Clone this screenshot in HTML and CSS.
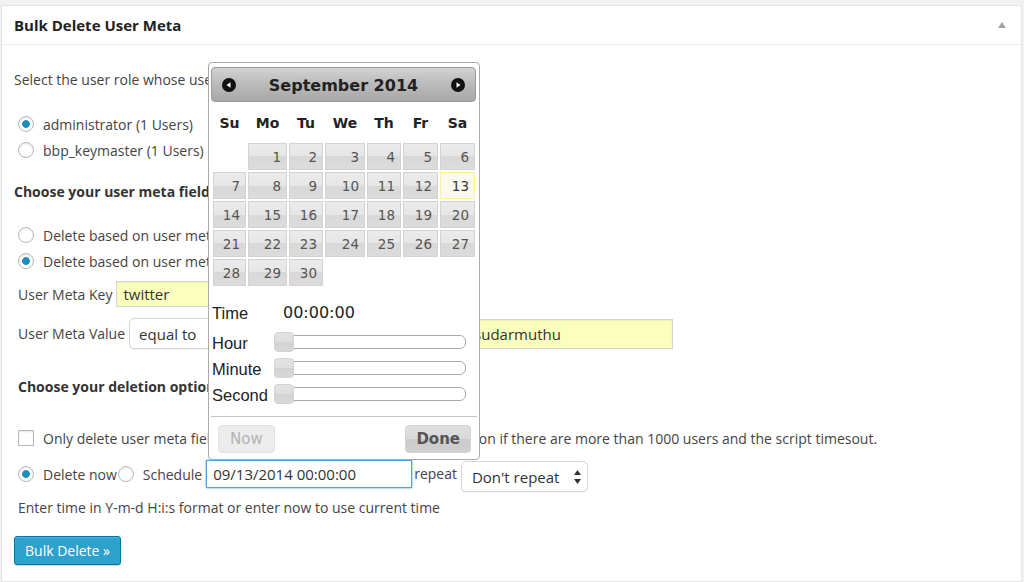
FILE: index.html
```html
<!DOCTYPE html>
<html lang="en">
<head>
    <meta charset="UTF-8">
    <title>Bulk Delete User Meta</title>
    <link rel="stylesheet" href="styles.css">
</head>
<body>
    <div class="postbox">
        <div class="hndle">
            <span>Bulk Delete User Meta</span>
            <svg class="toggle" width="8" height="6" viewBox="0 0 8 6"><polygon points="0,6 4,0 8,6" fill="#a0a5aa"/></svg>
        </div>

        <div class="inside">
            <p class="intro">Select the user role whose user meta fields you want to delete</p>

            <div class="options">
                <label class="opt"><input type="radio" name="role" class="radio" checked>administrator (1 Users)</label>
                <label class="opt"><input type="radio" name="role" class="radio">bbp_keymaster (1 Users)</label>
            </div>

            <h4 class="section">Choose your user meta field settings</h4>

            <div class="options">
                <label class="opt"><input type="radio" name="meta" class="radio">Delete based on user meta key name only</label>
                <label class="opt"><input type="radio" name="meta" class="radio" checked>Delete based on user meta key name and value</label>
            </div>

            <div class="field-row key-row">
                <span>User Meta Key</span>
                <input type="text" class="text autofill key-input" value="twitter">
            </div>

            <div class="field-row value-row">
                <span>User Meta Value</span>
                <div class="select op-select"><span>equal to</span>
                    <svg width="7" height="14" viewBox="0 0 7 14"><polygon points="0,5 3.5,0 7,5" fill="#333"/><polygon points="0,9 3.5,14 7,9" fill="#333"/></svg>
                </div>
                <div class="select type-select"><span>CHAR</span>
                    <svg width="7" height="14" viewBox="0 0 7 14"><polygon points="0,5 3.5,0 7,5" fill="#333"/><polygon points="0,9 3.5,14 7,9" fill="#333"/></svg>
                </div>
                <input type="text" class="text autofill value-input" value="sudarmuthu">
            </div>

            <h4 class="section indent">Choose your deletion options</h4>

            <label class="opt check-row"><input type="checkbox" class="checkbox">Only delete user meta fields from the first 1000 users. Use this option if there are more than 1000 users and the script timesout.</label>

            <div class="now-row">
                <label class="opt delete-now"><input type="radio" name="when" class="radio" checked>Delete now</label>
                <label class="opt schedule"><input type="radio" name="when" class="radio">Schedule</label>
                <input type="text" class="text focus schedule-input" value="09/13/2014 00:00:00">
                <span class="repeat">repeat</span>
                <div class="select repeat-select"><span>Don't repeat</span>
                    <svg width="7" height="14" viewBox="0 0 7 14"><polygon points="0,5 3.5,0 7,5" fill="#333"/><polygon points="0,9 3.5,14 7,9" fill="#333"/></svg>
                </div>
            </div>

            <p class="hint">Enter time in Y-m-d H:i:s format or enter now to use current time</p>

            <button class="button-primary">Bulk Delete &raquo;</button>
        </div>
    </div>

    <!-- datepicker popup, open over the schedule field -->
    <div class="datepicker">
        <div class="dp-header">
            <svg width="14" height="14" viewBox="0 0 14 14"><circle cx="7" cy="7" r="7" fill="#111"/><polygon points="4.5,7 8.5,4.2 8.5,9.8" fill="#fff"/></svg>
            <span class="dp-title">September 2014</span>
            <svg width="14" height="14" viewBox="0 0 14 14"><circle cx="7" cy="7" r="7" fill="#111"/><polygon points="9.5,7 5.5,4.2 5.5,9.8" fill="#fff"/></svg>
        </div>

        <table class="dp-calendar">
            <colgroup>
                <col class="col-su"><col class="col-mo"><col class="col-tu"><col class="col-we">
                <col class="col-th"><col class="col-fr"><col class="col-sa">
            </colgroup>
            <thead>
                <tr><th>Su</th><th>Mo</th><th>Tu</th><th>We</th><th>Th</th><th>Fr</th><th>Sa</th></tr>
            </thead>
            <tbody>
                <tr><td></td><td><a>1</a></td><td><a>2</a></td><td><a>3</a></td><td><a>4</a></td><td><a>5</a></td><td><a>6</a></td></tr>
                <tr><td><a>7</a></td><td><a>8</a></td><td><a>9</a></td><td><a>10</a></td><td><a>11</a></td><td><a>12</a></td><td><a class="today">13</a></td></tr>
                <tr><td><a>14</a></td><td><a>15</a></td><td><a>16</a></td><td><a>17</a></td><td><a>18</a></td><td><a>19</a></td><td><a>20</a></td></tr>
                <tr><td><a>21</a></td><td><a>22</a></td><td><a>23</a></td><td><a>24</a></td><td><a>25</a></td><td><a>26</a></td><td><a>27</a></td></tr>
                <tr><td><a>28</a></td><td><a>29</a></td><td><a>30</a></td><td></td><td></td><td></td><td></td></tr>
            </tbody>
        </table>

        <dl class="dp-time">
            <dt class="time-label">Time</dt>
            <dd class="time-value">00:00:00</dd>
            <dt>Hour</dt>
            <dd><div class="slider"><span class="handle"></span></div></dd>
            <dt>Minute</dt>
            <dd><div class="slider"><span class="handle"></span></div></dd>
            <dt>Second</dt>
            <dd><div class="slider"><span class="handle"></span></div></dd>
        </dl>

        <div class="dp-buttons">
            <button class="dp-btn now" disabled>Now</button>
            <button class="dp-btn done">Done</button>
        </div>
    </div>
</body>
</html>
```

FILE: styles.css
```css
body {
    margin: 0;
    background: #f1f1f1;
    font-family: 'Open Sans', sans-serif;
    font-size: 14px;
    color: #444;
}

.postbox {
    margin: 5px 2px 0 1px;
    background: #fff;
    border: 1px solid #e5e5e5;
    box-shadow: 0 1px 1px rgba(0,0,0,0.04);
}

.hndle {
    display: flex;
    justify-content: space-between;
    align-items: center;
    height: 38px;
    padding: 0 15px 0 12px;
    border-bottom: 1px solid #eee;
    font-size: 15px;
    font-weight: bold;
    color: #222;
}

.inside {
    padding: 0 12px 16px;
}

.intro {
    margin: 25px 0 0;
    line-height: 20px;
}

.options {
    margin-top: 21px;
}

.section + .options {
    margin-top: 20px;
}

.opt {
    display: flex;
    align-items: center;
    height: 26px;
    padding-left: 4px;
}

.section {
    margin: 19px 0 0;
    line-height: 20px;
    font-size: 14px;
    font-weight: bold;
    color: #333;
}

.section.indent {
    margin-top: 28px;
    padding-left: 4px;
}

.radio,
.checkbox {
    appearance: none;
    -webkit-appearance: none;
    flex: none;
    width: 16px;
    height: 16px;
    margin: 0 9px 0 0;
    border: 1px solid #b4b9be;
    background: #fff;
    box-shadow: inset 0 1px 2px rgba(0,0,0,0.1);
}

.radio {
    border-radius: 50%;
}

.radio:checked {
    background: radial-gradient(circle, #1e8cbe 0, #1e8cbe 3.5px, #fff 4.2px);
}

.field-row {
    display: flex;
    align-items: center;
    padding-left: 4px;
}

.key-row {
    margin-top: 7px;
}

.value-row {
    margin-top: 11px;
}

.text {
    box-sizing: border-box;
    margin: 0;
    padding: 0 6px;
    font-family: 'Open Sans', sans-serif;
    font-size: 15px;
    color: #333;
    border: 1px solid #d4d4d4;
    box-shadow: inset 0 1px 2px rgba(0,0,0,0.07);
    outline: none;
}

.autofill {
    background: #faffbd;
}

.key-input {
    width: 250px;
    height: 26px;
    margin-left: 4px;
}

.value-input {
    width: 206px;
    height: 30px;
    margin-left: 4px;
}

.select {
    box-sizing: border-box;
    display: flex;
    align-items: center;
    justify-content: space-between;
    height: 31px;
    padding: 0 6px 0 9px;
    font-size: 15px;
    color: #333;
    background: #fff;
    border: 1px solid #d6d6d6;
    border-radius: 5px;
    box-shadow: 0 1px 1px rgba(0,0,0,0.06);
}

.op-select {
    width: 130px;
    margin-left: 4px;
}

.type-select {
    width: 200px;
    margin-left: 4px;
}

.check-row {
    margin-top: 28px;
}

.checkbox {
    border-radius: 0;
}

.now-row {
    display: flex;
    align-items: flex-start;
    margin-top: 9px;
}

.now-row .opt {
    height: 28px;
}

.delete-now {
    margin-right: 1px;
}

.schedule {
    padding-left: 0;
    margin-right: 4px;
}

.schedule-input {
    width: 206px;
    height: 28px;
    border-color: #5b9dd9;
    box-shadow: 0 0 2px rgba(30,140,190,0.8);
}

.repeat {
    line-height: 28px;
    margin: 0 4px 0 2px;
}

.repeat-select {
    width: 127px;
    margin-top: 1px;
    padding-left: 10px;
}

.hint {
    margin: 6px 0 0;
    padding-left: 4px;
    line-height: 20px;
}

.button-primary {
    height: 29px;
    margin-top: 18px;
    padding: 0 10px 1px;
    font-family: 'Open Sans', sans-serif;
    font-size: 14px;
    color: #fff;
    background: #2ea2cc;
    border: 1px solid #0074a2;
    border-radius: 3px;
    box-shadow: inset 0 1px 0 rgba(120,200,230,0.5), 0 1px 0 rgba(0,0,0,0.15);
}

/* datepicker */

.datepicker {
    position: absolute;
    left: 208px;
    top: 62px;
    width: 266px;
    padding: 4px 2px 6px;
    background: #fff;
    border: 1px solid #aaa;
    border-radius: 4px;
    font-family: 'DejaVu Sans', Verdana, sans-serif;
    color: #222;
}

.dp-header {
    box-sizing: border-box;
    display: flex;
    align-items: center;
    justify-content: space-between;
    width: 265px;
    height: 35px;
    padding: 1px 10px 0;
    background: linear-gradient(#d2d2d2, #bcbcbc 45%, #a8a8a8);
    border: 1px solid #9a9a9a;
    border-radius: 4px;
}

.dp-title {
    font-size: 16px;
    font-weight: bold;
    color: #222;
}

.dp-calendar {
    width: 266px;
    table-layout: fixed;
    border-collapse: separate;
    border-spacing: 2px;
    font-size: 13.5px;
}

.col-su { width: 33px; }
.col-mo { width: 39px; }
.col-tu { width: 34px; }
.col-we { width: 40px; }
.col-th { width: 34px; }
.col-fr { width: 35px; }
.col-sa { width: 35px; }

.dp-calendar th {
    height: 37px;
    padding: 0;
    font-size: 14px;
    font-weight: bold;
    color: #222;
}

.dp-calendar td {
    padding: 0;
}

.dp-calendar a {
    display: block;
    height: 25px;
    line-height: 26px;
    padding: 0 5px;
    text-align: right;
    color: #555;
    background: linear-gradient(#ebebeb, #e6e6e6 50%, #d8d8d8 50%, #dcdcdc);
    border: 1px solid #d3d3d3;
}

.dp-calendar a.today {
    color: #363636;
    background: #fbf9ee;
    border-color: #fcefa1;
}

.dp-time {
    display: grid;
    grid-template-columns: 62px 1fr;
    align-items: center;
    row-gap: 4px;
    margin: 15px 0 0;
    padding-left: 1px;
}

.dp-time dt {
    font-family: 'Liberation Sans', Arial, sans-serif;
    font-size: 16.5px;
    line-height: 20px;
    padding-top: 2px;
    color: #222;
}

.dp-time dd {
    margin: 0;
}

.dp-time .time-label,
.dp-time .time-value {
    line-height: 20px;
    padding-top: 0;
    margin-bottom: 4px;
}

.time-value {
    padding-left: 9px;
    font-size: 16px;
}

.slider {
    position: relative;
    box-sizing: border-box;
    height: 14px;
    margin: 4px 11px 4px 0;
    background: #fff;
    border: 1px solid #aaa;
    border-radius: 6px;
}

.handle {
    position: absolute;
    left: -1px;
    top: -4px;
    box-sizing: border-box;
    width: 20px;
    height: 20px;
    background: linear-gradient(#e2e2e2, #dedede 50%, #d2d2d2 50%, #d8d8d8);
    border: 1px solid #d3d3d3;
    border-radius: 4px;
}

.dp-buttons {
    display: flex;
    justify-content: space-between;
    margin-top: 11px;
    padding: 8px 6px 0 7px;
    border-top: 1px solid #c5c5c5;
}

.dp-btn {
    height: 28px;
    padding: 0 10px;
    font-family: 'DejaVu Sans', Verdana, sans-serif;
    font-size: 15px;
    border: 1px solid #d3d3d3;
    border-radius: 4px;
}

.dp-btn.now {
    padding: 0 11px;
    color: #b3b3b3;
    background: #ececec;
    border-color: #e2e2e2;
}

.dp-btn.done {
    font-weight: bold;
    color: #555;
    background: linear-gradient(#dedede, #d9d9d9 50%, #cbcbcb 50%, #d0d0d0);
}
```
